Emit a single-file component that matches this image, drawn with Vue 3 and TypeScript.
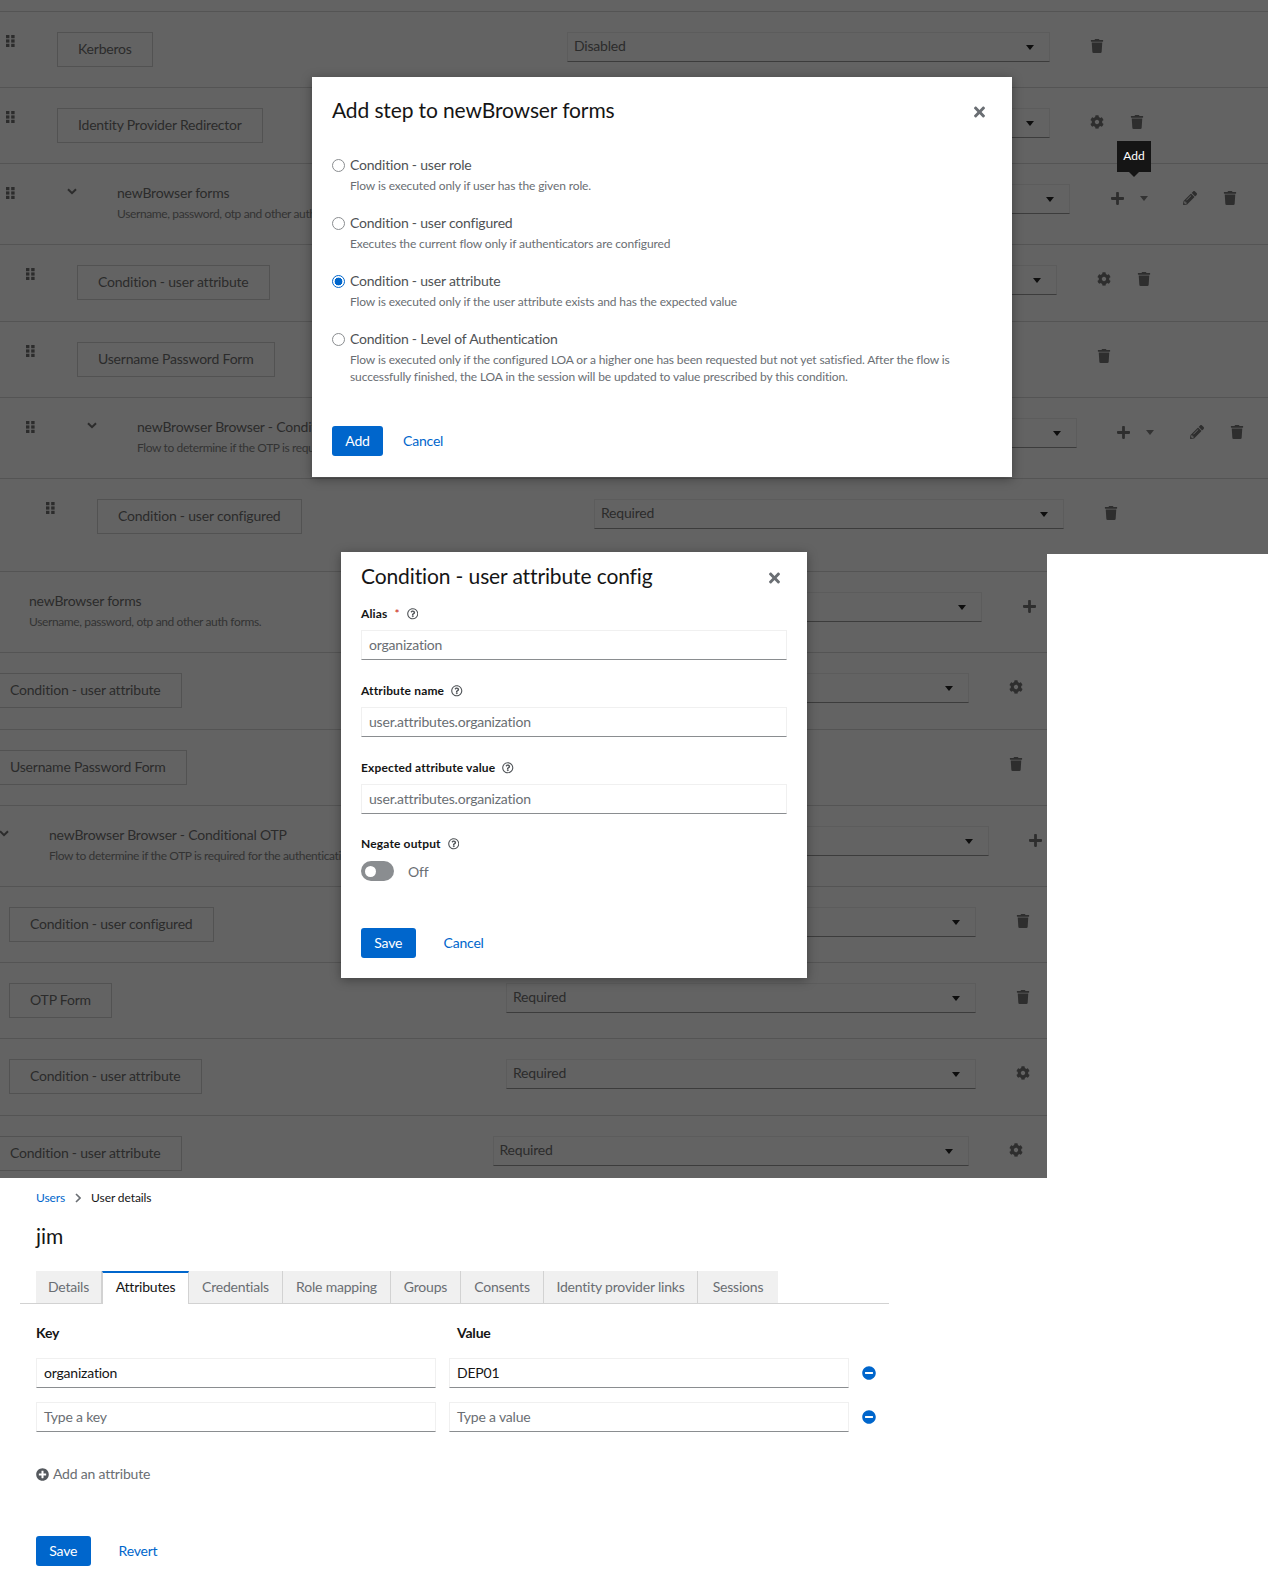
<script setup lang="ts">
interface Row {
  h: number
  lv: number
  flow?: boolean
  name?: string
  desc?: string
  sel?: string
  noSel?: boolean
  acts?: string[]
}

const icons: Record<string, { vb: string; d: string }> = {
  trash: { vb: '0 0 448 512', d: 'M432 32H312l-9.4-18.7A24 24 0 0 0 281.1 0H166.8a23.72 23.72 0 0 0-21.4 13.3L136 32H16A16 16 0 0 0 0 48v32a16 16 0 0 0 16 16h416a16 16 0 0 0 16-16V48a16 16 0 0 0-16-16zM53.2 467a48 48 0 0 0 47.9 45h245.8a48 48 0 0 0 47.9-45L416 128H32z' },
  cog: { vb: '0 0 512 512', d: 'M487.4 315.7l-42.6-24.6c4.3-23.2 4.3-47 0-70.2l42.6-24.6c4.9-2.8 7.1-8.6 5.5-14-11.1-35.6-30-67.8-54.7-94.6-3.8-4.1-10-5.1-14.8-2.3L380.8 110c-17.9-15.4-38.5-27.3-60.8-35.1V25.8c0-5.6-3.9-10.5-9.4-11.7-36.7-8.2-74.3-7.8-109.2 0-5.5 1.2-9.4 6.1-9.4 11.7V75c-22.2 7.9-42.8 19.8-60.8 35.1L88.7 85.5c-4.9-2.8-11-1.9-14.8 2.3-24.7 26.7-43.6 58.9-54.7 94.6-1.7 5.4.6 11.2 5.5 14L67.3 221c-4.3 23.2-4.3 47 0 70.2l-42.6 24.6c-4.9 2.8-7.1 8.6-5.5 14 11.1 35.6 30 67.8 54.7 94.6 3.8 4.1 10 5.1 14.8 2.3l42.6-24.6c17.9 15.4 38.5 27.3 60.8 35.1v49.2c0 5.6 3.9 10.5 9.4 11.7 36.7 8.2 74.3 7.8 109.2 0 5.5-1.2 9.4-6.1 9.4-11.7v-49.2c22.2-7.9 42.8-19.8 60.8-35.1l42.6 24.6c4.9 2.8 11 1.9 14.8-2.3 24.7-26.7 43.6-58.9 54.7-94.6 1.5-5.5-.7-11.3-5.6-14.1zM256 336c-44.1 0-80-35.9-80-80s35.9-80 80-80 80 35.9 80 80-35.9 80-80 80z' },
  plus: { vb: '0 0 448 512', d: 'M416 208H272V64c0-17.67-14.33-32-32-32h-32c-17.67 0-32 14.33-32 32v144H32c-17.67 0-32 14.33-32 32v32c0 17.67 14.33 32 32 32h144v144c0 17.67 14.33 32 32 32h32c17.67 0 32-14.33 32-32V304h144c17.67 0 32-14.33 32-32v-32c0-17.67-14.33-32-32-32z' },
  pencil: { vb: '0 0 512 512', d: 'M497.9 142.1l-46.1 46.1c-4.7 4.7-12.3 4.7-17 0l-111-111c-4.7-4.7-4.7-12.3 0-17l46.1-46.1c18.7-18.7 49.1-18.7 67.9 0l60.1 60.1c18.8 18.7 18.8 49.1 0 67.9zM284.2 99.8L21.6 362.4.4 483.9c-2.9 16.4 11.4 30.6 27.8 27.8l121.5-21.3 262.6-262.6c4.7-4.7 4.7-12.3 0-17l-111-111c-4.8-4.7-12.4-4.7-17.1 0zM124.1 339.9c-5.5-5.5-5.5-14.3 0-19.8l154-154c5.5-5.5 14.3-5.5 19.8 0s5.5 14.3 0 19.8l-154 154c-5.5 5.5-14.3 5.5-19.8 0zM88 424h48v36.3l-64.5 11.3-31.1-31.1L51.7 376H88v48z' },
  times: { vb: '0 0 352 512', d: 'M242.72 256l100.07-100.07c12.28-12.28 12.28-32.19 0-44.48l-22.24-22.24c-12.28-12.28-32.19-12.28-44.48 0L176 189.28 75.93 89.21c-12.28-12.28-32.19-12.28-44.48 0L9.21 111.45c-12.28 12.28-12.28 32.19 0 44.48L109.28 256 9.21 356.07c-12.28 12.28-12.28 32.19 0 44.48l22.24 22.24c12.28 12.28 32.2 12.28 44.48 0L176 322.72l100.07 100.07c12.28 12.28 32.2 12.28 44.48 0l22.24-22.24c12.28-12.28 12.28-32.19 0-44.48L242.72 256z' },
  minus: { vb: '0 0 512 512', d: 'M256 8C119 8 8 119 8 256s111 248 248 248 248-111 248-248S393 8 256 8zM124 296c-6.6 0-12-5.4-12-12v-56c0-6.6 5.4-12 12-12h264c6.6 0 12 5.4 12 12v56c0 6.6-5.4 12-12 12H124z' },
  plusc: { vb: '0 0 512 512', d: 'M256 8C119 8 8 119 8 256s111 248 248 248 248-111 248-248S393 8 256 8zm144 276c0 6.6-5.4 12-12 12h-92v92c0 6.6-5.4 12-12 12h-56c-6.6 0-12-5.4-12-12v-92h-92c-6.6 0-12-5.4-12-12v-56c0-6.6 5.4-12 12-12h92v-92c0-6.6 5.4-12 12-12h56c6.6 0 12 5.4 12 12v92h92c6.6 0 12 5.4 12 12v56z' },
  help: { vb: '0 0 512 512', d: 'M256 8C119.043 8 8 119.083 8 256c0 136.997 111.043 248 248 248s248-111.003 248-248C504 119.083 392.957 8 256 8zm0 448c-110.532 0-200-89.431-200-200 0-110.495 89.472-200 200-200 110.491 0 200 89.471 200 200 0 110.53-89.431 200-200 200zm107.244-255.2c0 67.052-72.421 68.084-72.421 92.863V300c0 6.627-5.373 12-12 12h-45.647c-6.627 0-12-5.373-12-12v-8.659c0-35.745 27.1-50.034 47.579-61.516 17.561-9.845 28.324-16.541 28.324-29.579 0-17.246-21.999-28.693-39.784-28.693-23.189 0-33.894 10.977-48.942 29.969-4.057 5.12-11.46 6.071-16.666 2.124l-27.824-21.098c-5.107-3.872-6.251-11.066-2.644-16.363C184.846 131.491 214.94 112 261.794 112c49.071 0 101.45 38.304 101.45 88.8zM298 368c0 23.159-18.841 42-42 42s-42-18.841-42-42 18.841-42 42-42 42 18.841 42 42z' },
}

const selXs = [567, 580.5, 594]
const selRs = [1050, 1056.5, 1063.5]
const indents = [6, 26, 46]

function cols(r: Row): string {
  const x = selXs[r.lv]
  const right = selRs[r.lv] + (r.flow ? 20 : 0)
  return `${x}px ${right - x}px auto`
}

const topRows: Row[] = [
  { h: 76, lv: 0, name: 'Kerberos', sel: 'Disabled', acts: ['trash'] },
  { h: 76, lv: 0, name: 'Identity Provider Redirector', sel: '', acts: ['cog', 'trash'] },
  { h: 81, lv: 0, flow: true, name: 'newBrowser forms', desc: 'Username, password, otp and other auth forms.', sel: '', acts: ['plus', 'caret', 'pencil', 'trash'] },
  { h: 77, lv: 1, name: 'Condition - user attribute', sel: '', acts: ['cog', 'trash'] },
  { h: 76, lv: 1, name: 'Username Password Form', noSel: true, acts: ['trash'] },
  { h: 81, lv: 1, flow: true, name: 'newBrowser Browser - Conditional OTP', desc: 'Flow to determine if the OTP is required for the authentication.', sel: '', acts: ['plus', 'caret', 'pencil', 'trash'] },
  { h: 75, lv: 2, name: 'Condition - user configured', sel: 'Required', acts: ['trash'] },
]

const midRows: Row[] = [
  { h: 81, lv: 0, flow: true, name: 'newBrowser forms', desc: 'Username, password, otp and other auth forms.', sel: '', acts: ['plus'] },
  { h: 77, lv: 1, name: 'Condition - user attribute', sel: '', acts: ['cog'] },
  { h: 76, lv: 1, name: 'Username Password Form', noSel: true, acts: ['trash'] },
  { h: 81, lv: 1, flow: true, name: 'newBrowser Browser - Conditional OTP', desc: 'Flow to determine if the OTP is required for the authentication.', sel: '', acts: ['plus'] },
  { h: 76, lv: 2, name: 'Condition - user configured', sel: '', acts: ['trash'] },
  { h: 76, lv: 2, name: 'OTP Form', sel: 'Required', acts: ['trash'] },
  { h: 77, lv: 2, name: 'Condition - user attribute', sel: 'Required', acts: ['cog'] },
  { h: 63, lv: 1, name: 'Condition - user attribute', sel: 'Required', acts: ['cog'] },
]

const panels = [
  { key: 'top', rows: topRows, strip: 12 },
  { key: 'mid', rows: midRows, strip: 18 },
]

const steps = [
  { label: 'Condition - user role', desc: 'Flow is executed only if user has the given role.', on: false },
  { label: 'Condition - user configured', desc: 'Executes the current flow only if authenticators are configured', on: false },
  { label: 'Condition - user attribute', desc: 'Flow is executed only if the user attribute exists and has the expected value', on: true },
  { label: 'Condition - Level of Authentication', desc: 'Flow is executed only if the configured LOA or a higher one has been requested but not yet satisfied. After the flow is successfully finished, the LOA in the session will be updated to value prescribed by this condition.', on: false },
]

const configFields = [
  { label: 'Alias', req: true, value: 'organization' },
  { label: 'Attribute name', req: false, value: 'user.attributes.organization' },
  { label: 'Expected attribute value', req: false, value: 'user.attributes.organization' },
]

const tabs = [
  { t: 'Details', w: 66 },
  { t: 'Attributes', w: 87, on: true },
  { t: 'Credentials', w: 94 },
  { t: 'Role mapping', w: 108 },
  { t: 'Groups', w: 70 },
  { t: 'Consents', w: 83 },
  { t: 'Identity provider links', w: 154 },
  { t: 'Sessions', w: 80 },
]
</script>

<template>
  <div class="page">
    <section v-for="p in panels" :key="p.key" class="panel" :class="p.key">
      <div class="clip">
        <div class="rows">
          <div class="row strip" :style="{ height: p.strip + 'px' }"></div>
          <div
            v-for="(r, i) in p.rows"
            :key="i"
            class="row"
            :class="{ last: i === p.rows.length - 1 }"
            :style="{ height: r.h + 'px', gridTemplateColumns: cols(r) }"
          >
            <div class="left" :style="{ paddingLeft: indents[r.lv] + 'px' }">
              <svg class="grip" viewBox="0 0 9 12"><g>
                <rect x="0" y="0" width="3.4" height="3.2" /><rect x="5.2" y="0" width="3.4" height="3.2" />
                <rect x="0" y="4.4" width="3.4" height="3.2" /><rect x="5.2" y="4.4" width="3.4" height="3.2" />
                <rect x="0" y="8.8" width="3.4" height="3.2" /><rect x="5.2" y="8.8" width="3.4" height="3.2" />
              </g></svg>
              <template v-if="r.flow">
                <svg class="chev" viewBox="0 0 10 7"><path d="M1 1.2 5 5.2 9 1.2" /></svg>
                <div class="flowtext">
                  <div class="ftitle">{{ r.name }}</div>
                  <div class="fdesc">{{ r.desc }}</div>
                </div>
              </template>
              <div v-else class="box">{{ r.name }}</div>
            </div>
            <div class="selcell">
              <div v-if="!r.noSel" class="select">
                <span>{{ r.sel }}</span>
                <i class="selcaret"></i>
              </div>
            </div>
            <div class="acts">
              <template v-for="a in r.acts" :key="a">
                <span v-if="a === 'caret'" class="act caretbox"><i class="smallcaret"></i></span>
                <span v-else class="act" :class="a">
                  <svg :viewBox="icons[a].vb"><path :d="icons[a].d" /></svg>
                </span>
              </template>
            </div>
          </div>
        </div>
      </div>

      <template v-if="p.key === 'top'">
        <div class="tooltip">Add</div>
        <div class="modal step">
          <div class="mhead">
            <h2>Add step to newBrowser forms</h2>
            <svg class="close" :viewBox="icons.times.vb"><path :d="icons.times.d" /></svg>
          </div>
          <div class="opts">
            <div v-for="s in steps" :key="s.label" class="opt">
              <span class="radio" :class="{ on: s.on }"></span>
              <div>
                <div class="olabel">{{ s.label }}</div>
                <div class="odesc">{{ s.desc }}</div>
              </div>
            </div>
          </div>
          <div class="btns">
            <button class="primary">Add</button>
            <a class="link">Cancel</a>
          </div>
        </div>
      </template>

      <div v-else class="modal config">
        <div class="mhead">
          <h2>Condition - user attribute config</h2>
          <svg class="close" :viewBox="icons.times.vb"><path :d="icons.times.d" /></svg>
        </div>
        <div v-for="f in configFields" :key="f.label" class="field">
          <div class="flabel">
            <span>{{ f.label }}</span>
            <b v-if="f.req" class="req">*</b>
            <svg class="help" :viewBox="icons.help.vb"><path :d="icons.help.d" /></svg>
          </div>
          <div class="input ro">{{ f.value }}</div>
        </div>
        <div class="flabel neg">
          <span>Negate output</span>
          <svg class="help" :viewBox="icons.help.vb"><path :d="icons.help.d" /></svg>
        </div>
        <div class="toggle-row">
          <span class="toggle"><i></i></span>
          <span class="off">Off</span>
        </div>
        <div class="btns cfg">
          <button class="primary">Save</button>
          <a class="link">Cancel</a>
        </div>
      </div>
    </section>

    <section class="user">
      <nav class="crumb">
        <a>Users</a>
        <svg viewBox="0 0 6 10"><path d="M1 1 5 5 1 9" /></svg>
        <span>User details</span>
      </nav>
      <h1>jim</h1>
      <div class="tabs">
        <div v-for="t in tabs" :key="t.t" class="tab" :class="{ on: t.on }" :style="{ width: t.w + 'px' }">{{ t.t }}</div>
      </div>
      <div class="attrs">
        <div class="th">Key</div>
        <div class="th val">Value</div>
        <div></div>
        <div class="input dark">organization</div>
        <div class="input dark">DEP01</div>
        <svg class="minus" :viewBox="icons.minus.vb"><path :d="icons.minus.d" /></svg>
        <div class="input ph">Type a key</div>
        <div class="input ph">Type a value</div>
        <svg class="minus" :viewBox="icons.minus.vb"><path :d="icons.minus.d" /></svg>
      </div>
      <div class="addattr">
        <svg :viewBox="icons.plusc.vb"><path :d="icons.plusc.d" /></svg>
        <span>Add an attribute</span>
      </div>
      <div class="btns usr">
        <button class="primary">Save</button>
        <a class="link revert">Revert</a>
      </div>
    </section>
  </div>
</template>

<style scoped>
.page {
  width: 1268px;
  height: 1570px;
  overflow: hidden;
  background: #fff;
  font-family: Lato, "Liberation Sans", sans-serif;
  font-size: 14px;
  letter-spacing: -0.2px;
  color: #151515;
}
.panel { position: relative; }
.panel.top { height: 554px; }
.panel.mid { height: 624px; width: 1047px; }
.clip { height: 100%; overflow: hidden; background: #636363; }
.mid .rows { margin-left: -88px; width: 1135px; }
.row {
  box-sizing: border-box;
  display: grid;
  border-bottom: 1px solid #545454;
  padding-top: 20px;
}
.row.last { border-bottom: 0; }
.row.strip { padding: 0; }
.left { display: flex; align-items: flex-start; white-space: nowrap; min-width: 0; }
.grip { width: 9px; height: 12px; flex: none; margin-top: 3px; fill: #2c2c2c; }
.box {
  box-sizing: border-box;
  height: 35px;
  margin-left: 42px;
  padding: 0 20px 2px;
  display: flex;
  align-items: center;
  border: 1px solid #525252;
  color: #2b2b2b;
}
.chev { width: 10px; height: 7px; margin: 4px 0 0 52px; flex: none; fill: none; stroke: #2c2c2c; stroke-width: 2; }
.flowtext { margin-left: 40px; }
.ftitle { line-height: 20px; margin-top: -1px; color: #2b2b2b; }
.fdesc { font-size: 12px; letter-spacing: -0.38px; line-height: 18px; margin-top: 2px; color: #333; }
.select {
  box-sizing: border-box;
  height: 30px;
  border: 1px solid #5c5c5c;
  border-bottom-color: #3c3c3c;
  padding: 0 15px 4px 6px;
  display: flex;
  align-items: center;
  justify-content: space-between;
  color: #2b2b2b;
}
.selcaret { width: 0; height: 0; border: 4.5px solid transparent; border-top: 5px solid #0e0e0e; border-bottom: 0; margin-top: 4px; }
.acts { display: flex; align-items: center; height: 28px; padding-left: 27px; }
.act { display: flex; width: 40px; justify-content: center; }
.act svg { height: 14px; width: 14px; fill: #2e2e2e; }
.act.plus svg { width: 13px; height: 15px; }
.act.caretbox { width: 13px; }
.smallcaret { width: 0; height: 0; border: 4.5px solid transparent; border-top: 5px solid #333; border-bottom: 0; }
.act.pencil { margin-left: 20px; }
.tooltip {
  position: absolute;
  left: 1117px;
  top: 141px;
  width: 34px;
  height: 31px;
  background: #151515;
  color: #fff;
  font-size: 12px;
  letter-spacing: 0;
  display: flex;
  align-items: center;
  justify-content: center;
  padding-bottom: 2px;
  box-sizing: border-box;
}
.tooltip::after {
  content: "";
  position: absolute;
  left: 12px;
  top: 31px;
  border: 5px solid transparent;
  border-top-color: #151515;
  border-bottom: 0;
}
.modal {
  position: absolute;
  background: #fff;
  box-sizing: border-box;
  box-shadow: 0 2px 10px rgba(0, 0, 0, 0.35);
  z-index: 2;
}
.modal.step { left: 312px; top: 77px; width: 700px; height: 400px; padding: 20px; }
.modal.config { left: 341px; top: -2px; width: 466px; height: 426px; padding: 13px 20px 0; }
.mhead { display: flex; justify-content: space-between; align-items: center; }
h2 { margin: 0 0 3px; font-size: 21px; letter-spacing: -0.12px; font-weight: 400; line-height: 26px; color: #151515; }
.config h2 { margin-bottom: 4px; }
.close { width: 11px; height: 16px; fill: #6a6e73; margin-right: 7px; }
.step .close { margin-top: 1px; }
.opts { margin-top: 30px; }
.opt { display: flex; align-items: flex-start; height: 58px; }
.radio {
  box-sizing: border-box;
  width: 13px;
  height: 13px;
  border: 1px solid #8a8d90;
  border-radius: 50%;
  margin: 3px 5px 0 0;
  flex: none;
}
.radio.on { border-color: #06c; background: radial-gradient(circle, #06c 0 3.6px, #fff 4.2px); }
.olabel { line-height: 18px; color: #4f5255; }
.odesc { font-size: 12px; letter-spacing: -0.12px; line-height: 17px; margin-top: 3px; color: #6a6e73; }
.btns { display: flex; align-items: center; margin-top: 38px; }
button.primary {
  border: 0;
  background: #06c;
  color: #fff;
  border-radius: 3px;
  height: 30px;
  padding: 0 13.3px 2px;
  font: inherit;
  letter-spacing: inherit;
  font-size: 14px;
  box-sizing: border-box;
}
.link { color: #06c; margin-left: 20px; padding-bottom: 2px; }
.config .mhead { height: 26px; }
.config .mhead + .field { margin-top: 15px; }
.field + .field { margin-top: 23px; }
.flabel { display: flex; align-items: center; font-size: 12px; letter-spacing: 0.15px; font-weight: 700; color: #151515; line-height: 16px; }
.req { color: #c9190b; margin-left: 7px; font-weight: 400; }
.help { width: 11.5px; height: 11.5px; margin-left: 7px; fill: #505458; }
.input {
  box-sizing: border-box;
  height: 30px;
  border: 1px solid #f0f0f0;
  border-bottom-color: #8a8d90;
  padding: 0 7px 1px;
  display: flex;
  align-items: center;
}
.field .input { margin-top: 8px; }
.input.ro { color: #6a6e73; }
.input.dark { color: #151515; }
.input.ph { color: #6a6e73; }
.flabel.neg { margin-top: 22px; }
.toggle-row { display: flex; align-items: center; gap: 14px; margin-top: 9px; }
.toggle { width: 33px; height: 20px; border-radius: 10px; background: #8a8d90; display: flex; align-items: center; padding-left: 4px; box-sizing: border-box; }
.toggle i { width: 11px; height: 11px; border-radius: 50%; background: #fff; }
.off { color: #6a6e73; }
.btns.cfg { margin-top: 47px; }
.btns.cfg .link { margin-left: 28px; }
.user { height: 392px; box-sizing: border-box; padding: 12px 0 0 36px; }
.crumb { display: flex; align-items: center; font-size: 12px; letter-spacing: -0.1px; line-height: 16px; }
.crumb a { color: #06c; }
.crumb svg { width: 6px; height: 10px; margin: 0 10px; fill: none; stroke: #6a6e73; stroke-width: 1.6; }
h1 { margin: 17px 0 0; font-size: 21px; letter-spacing: -0.1px; font-weight: 400; line-height: 26px; }
.tabs {
  display: flex;
  width: 869px;
  margin: 22px 0 0 -16px;
  padding-left: 16px;
  box-sizing: border-box;
  border-bottom: 1px solid #d2d2d2;
  height: 33px;
}
.tab {
  box-sizing: border-box;
  height: 32px;
  background: #f0f0f0;
  color: #6a6e73;
  display: flex;
  align-items: center;
  justify-content: center;
  border-right: 1px solid #d2d2d2;
  padding-bottom: 2px;
  white-space: nowrap;
}
.tab:last-child { border-right: 0; }
.tab.on {
  background: #fff;
  color: #151515;
  border-top: 2px solid #06c;
  border-left: 1px solid #d2d2d2;
  height: 33px;
  padding-bottom: 5px;
}
.attrs {
  display: grid;
  grid-template-columns: 400px 400px 14px;
  column-gap: 13px;
  row-gap: 14px;
  align-items: center;
  margin-top: 20px;
}
.th { font-weight: 700; line-height: 18px; margin-bottom: 2px; }
.th.val { margin-left: 8px; }
.minus { width: 14px; height: 14px; fill: #06c; }
.addattr { display: flex; align-items: center; gap: 4px; margin-top: 33px; color: #6a6e73; line-height: 18px; }
.addattr svg { width: 13px; height: 13px; fill: #55595e; }
.btns.usr { margin-top: 53px; }
.btns.usr .link { margin-left: 28px; }
</style>
